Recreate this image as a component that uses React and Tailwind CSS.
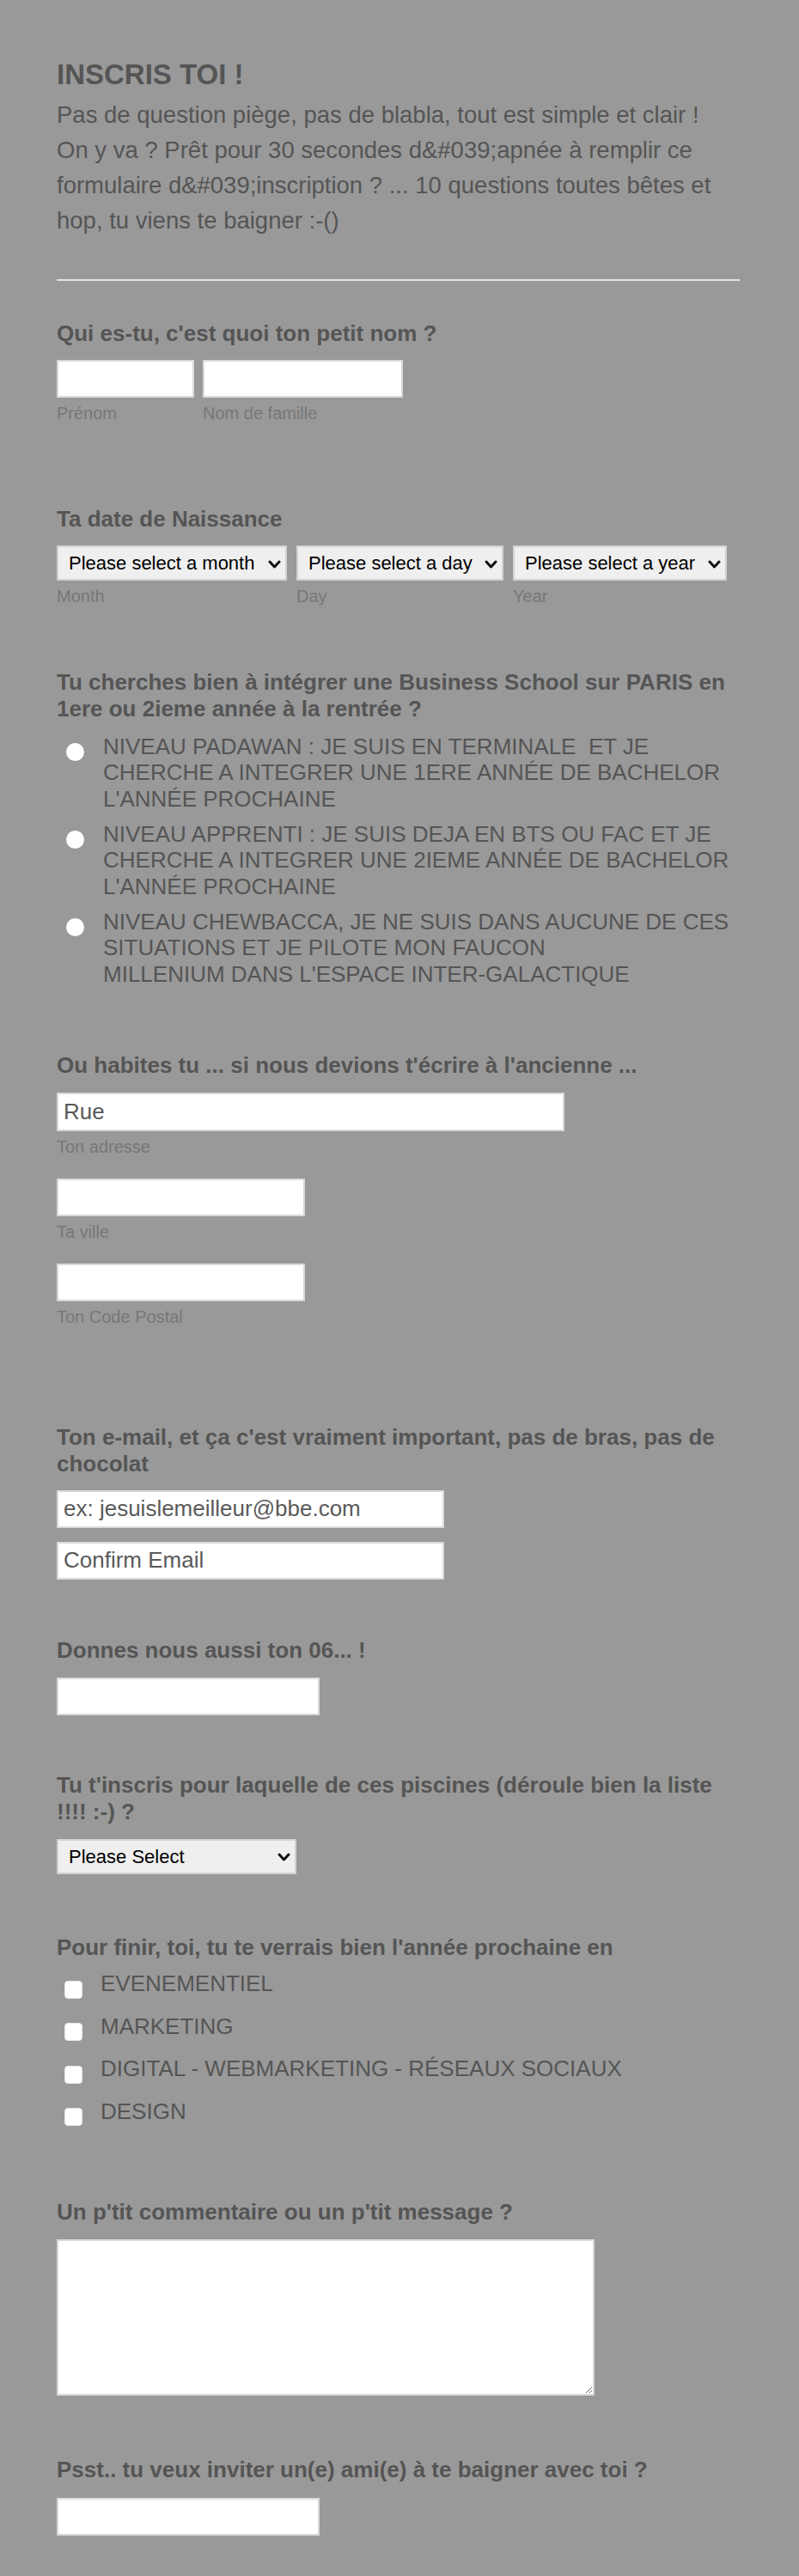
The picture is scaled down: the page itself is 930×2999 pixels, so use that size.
import React from "react";

function Chevron() {
  return (
    <svg
      className="pointer-events-none absolute right-[7px] top-1/2 -translate-y-1/2 mt-[1px]"
      width="15"
      height="11"
      viewBox="0 0 15 11"
      fill="none"
    >
      <path d="M2 2.5 L7.5 8.5 L13 2.5" stroke="#111" strokeWidth="3" strokeLinecap="round" strokeLinejoin="round" />
    </svg>
  );
}

function Select({ w, label }) {
  return (
    <div className="relative" style={{ width: w }}>
      <select className="appearance-none w-full h-[41px] bg-[#efefef] border-2 border-[#d2d2d2] pl-[12px] text-[22px] text-black font-['Liberation_Sans',Arial,sans-serif] outline-none">
        <option>{label}</option>
      </select>
      <Chevron />
    </div>
  );
}

function Label({ children, mt }) {
  return (
    <div className={`text-[26px] leading-[31px] font-bold text-[#555] ${mt}`}>{children}</div>
  );
}

function Sub({ children }) {
  return <div className="mt-[6px] text-[20px] leading-[24px] text-[#777]">{children}</div>;
}

function TextInput({ w, placeholder, mt = "" }) {
  return (
    <input
      type="text"
      placeholder={placeholder}
      className={`block h-[44px] bg-white border-2 border-[#d9d9d9] px-[6px] text-[26px] text-[#555] placeholder:text-[#5a5a5a] outline-none ${w} ${mt}`}
    />
  );
}

export default function App() {
  const radios = [
    ["NIVEAU PADAWAN : JE SUIS EN TERMINALE\u00a0 ET JE", "CHERCHE A INTEGRER UNE 1ERE ANNÉE DE BACHELOR", "L'ANNÉE PROCHAINE"],
    ["NIVEAU APPRENTI : JE SUIS DEJA EN BTS OU FAC ET JE", "CHERCHE A INTEGRER UNE 2IEME ANNÉE DE BACHELOR", "L'ANNÉE PROCHAINE"],
    ["NIVEAU CHEWBACCA, JE NE SUIS DANS AUCUNE DE CES", "SITUATIONS ET JE PILOTE MON FAUCON", "MILLENIUM DANS L'ESPACE INTER-GALACTIQUE"],
  ];
  const checks = ["EVENEMENTIEL", "MARKETING", "DIGITAL - WEBMARKETING - RÉSEAUX SOCIAUX", "DESIGN"];

  return (
    <div className="min-h-[2999px] w-full bg-[#999999] px-[66px] pt-[67px] pb-[47px] font-['Liberation_Sans',Arial,sans-serif]">
      <h1 className="text-[33px] leading-[40px] font-bold text-[#555]">INSCRIS TOI !</h1>
      <p className="mt-[6px] text-[27.5px] leading-[41px] text-[#555]">
        Pas de question piège, pas de blabla, tout est simple et clair !
        <br />
        {"On y va ? Prêt pour 30 secondes d&#039;apnée à remplir ce"}
        <br />
        {"formulaire d&#039;inscription ? ... 10 questions toutes bêtes et"}
        <br />
        hop, tu viens te baigner :-()
      </p>
      <hr className="mt-[48px] w-[795px] h-0 border-0 border-t-2 border-[#e2e2e2]" />

      <Label mt="mt-[45.5px]">Qui es-tu, c'est quoi ton petit nom ?</Label>
      <div className="mt-[15.5px] flex gap-[10px]">
        <div className="w-[160px]">
          <TextInput w="w-[160px]" />
          <Sub>Prénom</Sub>
        </div>
        <div className="w-[233px]">
          <TextInput w="w-[233px]" />
          <Sub>Nom de famille</Sub>
        </div>
      </div>

      <Label mt="mt-[95.5px]">Ta date de Naissance</Label>
      <div className="mt-[15.5px] flex gap-[11px]">
        <div>
          <Select w="268px" label="Please select a month" />
          <Sub>Month</Sub>
        </div>
        <div>
          <Select w="241px" label="Please select a day" />
          <Sub>Day</Sub>
        </div>
        <div>
          <Select w="249px" label="Please select a year" />
          <Sub>Year</Sub>
        </div>
      </div>

      <Label mt="mt-[72.5px]">
        Tu cherches bien à intégrer une Business School sur PARIS en
        <br />
        1ere ou 2ieme année à la rentrée ?
      </Label>
      <div className="mt-[13px] flex flex-col gap-[10.5px]">
        {radios.map((lines, i) => (
          <label key={i} className="flex items-start">
            <input
              type="radio"
              name="niveau"
              className="appearance-none ml-[11px] mt-[11.5px] w-[21px] h-[21px] shrink-0 rounded-full bg-white"
            />
            <span className="ml-[22px] text-[26px] leading-[30.5px] text-[#555]">
              {lines.map((l, j) => (
                <span key={j} className="block whitespace-nowrap">
                  {l}
                </span>
              ))}
            </span>
          </label>
        ))}
      </div>

      <Label mt="mt-[76px]">Ou habites tu ... si nous devions t'écrire à l'ancienne ...</Label>
      <TextInput w="w-[591px]" placeholder="Rue" mt="mt-[15.5px] h-[45px]" />
      <Sub>Ton adresse</Sub>
      <TextInput w="w-[289px]" mt="mt-[25px]" />
      <Sub>Ta ville</Sub>
      <TextInput w="w-[289px]" mt="mt-[25px]" />
      <Sub>Ton Code Postal</Sub>

      <Label mt="mt-[113.5px]">
        Ton e-mail, et ça c'est vraiment important, pas de bras, pas de
        <br />
        chocolat
      </Label>
      <TextInput w="w-[451px]" placeholder="ex: jesuislemeilleur@bbe.com" mt="mt-[14.5px]" />
      <TextInput w="w-[451px]" placeholder="Confirm Email" mt="mt-[16px]" />

      <Label mt="mt-[67.5px]">Donnes nous aussi ton 06... !</Label>
      <TextInput w="w-[306px]" mt="mt-[15.5px]" />

      <Label mt="mt-[66.5px]">
        Tu t'inscris pour laquelle de ces piscines (déroule bien la liste
        <br />
        !!!! :-) ?
      </Label>
      <div className="mt-[15.5px]">
        <Select w="279px" label="Please Select" />
      </div>

      <Label mt="mt-[70px]">Pour finir, toi, tu te verrais bien l'année prochaine en</Label>
      <div className="mt-[11.5px] flex flex-col gap-[17px]">
        {checks.map((c) => (
          <label key={c} className="flex items-start">
            <input
              type="checkbox"
              className="appearance-none ml-[9px] mt-[11.5px] w-[21px] h-[21px] shrink-0 rounded-[4px] bg-white border border-[#e6e6e6]"
            />
            <span className="ml-[21px] text-[26px] leading-[30.5px] text-[#555] whitespace-nowrap">{c}</span>
          </label>
        ))}
      </div>

      <Label mt="mt-[84.5px]">Un p'tit commentaire ou un p'tit message ?</Label>
      <textarea className="block mt-[16px] w-[626px] h-[182px] bg-white border-2 border-[#d9d9d9] outline-none" />

      <Label mt="mt-[71px]">Psst.. tu veux inviter un(e) ami(e) à te baigner avec toi ?</Label>
      <TextInput w="w-[306px]" mt="mt-[17px]" />
    </div>
  );
}
